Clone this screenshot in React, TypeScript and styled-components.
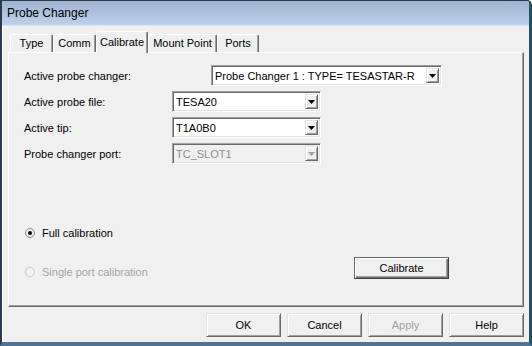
import React from "react";
import styled, { createGlobalStyle } from "styled-components";

const GlobalStyle = createGlobalStyle`
  html, body { margin: 0; padding: 0; background: #f0f0f0; overflow: hidden; }
  body { font-family: "Liberation Sans", Arial, sans-serif; font-size: 11px; color: #000; }
  * { box-sizing: border-box; }
`;

const Window = styled.div`
  width: 532px;
  height: 346px;
  display: flex;
  flex-direction: column;
  border-top: 1px solid #2b3a4d;
  border-left: 2px solid #2b3a4d;
  border-right: 3px solid #24505f;
  border-bottom: 4px solid #4d7398;
  border-top-right-radius: 5px;
  overflow: hidden;
`;

const TitleBar = styled.div`
  height: 25px;
  flex: none;
  display: flex;
  align-items: center;
  padding-left: 5px;
  padding-bottom: 1px;
  font-size: 12px;
  color: #000;
  background: linear-gradient(#9fb3d1, #bed2ea);
  border-bottom: 1px solid #d9e4f2;
`;

const Client = styled.div`
  flex: 1;
  display: flex;
  flex-direction: column;
  background: #f0f0f0;
  padding: 5px 5px 5px 6px;
  box-shadow: inset 1px 0 #ffffff;
`;

const TabStrip = styled.div`
  height: 21px;
  flex: none;
  display: flex;
  align-items: flex-end;
  padding-left: 2px;
  position: relative;
  z-index: 1;
`;

const Tab = styled.div<{ $w: number; $active?: boolean }>`
  width: ${(p) => p.$w}px;
  height: ${(p) => (p.$active ? 22 : 18)}px;
  margin-bottom: ${(p) => (p.$active ? -1 : 0)}px;
  display: flex;
  align-items: center;
  justify-content: center;
  padding-bottom: ${(p) => (p.$active ? 2 : 1)}px;
  background: #f0f0f0;
  border-top: 1px solid #ffffff;
  border-left: 1px solid #ffffff;
  border-right: 1px solid #696969;
  border-radius: 2px 2px 0 0;
  box-shadow: inset -1px 0 #a0a0a0;
`;

const Panel = styled.div`
  height: 255px;
  flex: none;
  display: flex;
  flex-direction: column;
  border: 1px solid;
  border-color: #ffffff #696969 #696969 #ffffff;
  box-shadow: inset -1px -1px #a0a0a0;
  padding: 12px 0 0 15px;
`;

const Fields = styled.div`
  display: flex;
  flex-direction: column;
  gap: 5px;
`;

const FieldRow = styled.div<{ $labelW: number; $selectW: number }>`
  display: grid;
  grid-template-columns: ${(p) => p.$labelW}px ${(p) => p.$selectW}px;
  align-items: center;
  height: 21px;
`;

const Label = styled.span`
  white-space: nowrap;
`;

const Combo = styled.div<{ $disabled?: boolean }>`
  height: 21px;
  display: flex;
  align-items: center;
  padding: 2px 2px 2px 2px;
  border: 1px solid;
  border-color: #a0a0a0 #ffffff #ffffff #a0a0a0;
  box-shadow: inset 1px 1px #696969, inset -1px -1px #e3e3e3;
  background: ${(p) => (p.$disabled ? "#f0f0f0" : "#ffffff")};
  color: ${(p) => (p.$disabled ? "#8d8d8d" : "#000")};
`;

const ComboText = styled.span`
  flex: 1;
  padding-left: 1px;
  white-space: nowrap;
  overflow: hidden;
`;

const DropButton = styled.div`
  width: 13px;
  height: 15px;
  flex: none;
  display: flex;
  align-items: center;
  justify-content: center;
  background: #f0f0f0;
  border: 1px solid;
  border-color: #e3e3e3 #696969 #696969 #e3e3e3;
  box-shadow: inset 1px 1px #ffffff, inset -1px -1px #a0a0a0;
`;

const RadioSection = styled.div`
  display: grid;
  grid-template-columns: 330px 95px;
  grid-template-rows: 16px 22px;
  row-gap: 16px;
  margin-top: 61px;
`;

const Radio = styled.label<{ $disabled?: boolean; $bottom?: boolean }>`
  display: flex;
  align-items: center;
  gap: 7px;
  height: 16px;
  padding-left: 1px;
  align-self: ${(p) => (p.$bottom ? "end" : "center")};
  margin-bottom: ${(p) => (p.$bottom ? -1 : 0)}px;
  color: ${(p) => (p.$disabled ? "#a6a6a6" : "#000")};
  grid-column: 1;
`;

const RadioCircle = styled.span<{ $checked?: boolean; $disabled?: boolean }>`
  width: 10px;
  height: 10px;
  border-radius: 50%;
  flex: none;
  position: relative;
  border: 1px solid ${(p) => (p.$disabled ? "#c9c9c9" : "#8a8a8a")};
  background: ${(p) =>
    p.$disabled
      ? "#f4f4f4"
      : "radial-gradient(circle at 40% 40%, #ffffff, #e0e0e0)"};
  &::after {
    content: "";
    display: ${(p) => (p.$checked ? "block" : "none")};
    position: absolute;
    left: 2px;
    top: 2px;
    width: 4px;
    height: 4px;
    border-radius: 50%;
    background: #000;
  }
`;

const Button = styled.div<{ $w: number; $h: number; $disabled?: boolean; $default?: boolean }>`
  width: ${(p) => p.$w}px;
  height: ${(p) => p.$h}px;
  display: flex;
  align-items: center;
  justify-content: center;
  background: #f0f0f0;
  color: ${(p) => (p.$disabled ? "#a0a0a0" : "#000")};
  border: 1px solid;
  border-color: ${(p) =>
    p.$default ? "#6a6a6a #404040 #404040 #6a6a6a" : "#e3e3e3 #696969 #696969 #e3e3e3"};
  box-shadow: ${(p) =>
    p.$default
      ? "inset 1px 1px #ffffff, inset -1px -1px #707070, inset -2px -2px #a0a0a0"
      : "inset 1px 1px #ffffff, inset -1px -1px #a0a0a0"};
`;

const CalibrateCell = styled.div`
  grid-column: 2;
  grid-row: 2;
`;

const ButtonRow = styled.div`
  display: flex;
  justify-content: flex-end;
  gap: 6px;
  margin-top: 6px;
`;

const Arrow = ({ color }: { color: string }) => (
  <svg width="7" height="4" viewBox="0 0 7 4">
    <polygon points="0,0 7,0 3.5,4" fill={color} />
  </svg>
);

type Field = { label: string; value: string; labelW: number; selectW: number; disabled?: boolean };

const fields: Field[] = [
  { label: "Active probe changer:", value: "Probe Changer 1 : TYPE= TESASTAR-R", labelW: 187, selectW: 231 },
  { label: "Active probe file:", value: "TESA20", labelW: 148, selectW: 149 },
  { label: "Active tip:", value: "T1A0B0", labelW: 148, selectW: 149 },
  { label: "Probe changer port:", value: "TC_SLOT1", labelW: 148, selectW: 149, disabled: true },
];

const tabs = [
  { name: "Type", w: 43 },
  { name: "Comm", w: 43 },
  { name: "Calibrate", w: 52, active: true },
  { name: "Mount Point", w: 69 },
  { name: "Ports", w: 42 },
];

export default function App() {
  return (
    <>
      <GlobalStyle />
      <Window>
        <TitleBar>Probe Changer</TitleBar>
        <Client>
          <TabStrip>
            {tabs.map((t) => (
              <Tab key={t.name} $w={t.w} $active={t.active}>
                {t.name}
              </Tab>
            ))}
          </TabStrip>
          <Panel>
            <Fields>
              {fields.map((f) => (
                <FieldRow key={f.label} $labelW={f.labelW} $selectW={f.selectW}>
                  <Label>{f.label}</Label>
                  <Combo $disabled={f.disabled}>
                    <ComboText>{f.value}</ComboText>
                    <DropButton>
                      <Arrow color={f.disabled ? "#a0a0a0" : "#000"} />
                    </DropButton>
                  </Combo>
                </FieldRow>
              ))}
            </Fields>
            <RadioSection>
              <Radio>
                <RadioCircle $checked />
                Full calibration
              </Radio>
              <Radio $disabled $bottom>
                <RadioCircle $disabled />
                Single port calibration
              </Radio>
              <CalibrateCell>
                <Button $w={95} $h={22} $default>
                  Calibrate
                </Button>
              </CalibrateCell>
            </RadioSection>
          </Panel>
          <ButtonRow>
            <Button $w={75} $h={24}>OK</Button>
            <Button $w={75} $h={24}>Cancel</Button>
            <Button $w={75} $h={24} $disabled>Apply</Button>
            <Button $w={75} $h={24}>Help</Button>
          </ButtonRow>
        </Client>
      </Window>
    </>
  );
}
